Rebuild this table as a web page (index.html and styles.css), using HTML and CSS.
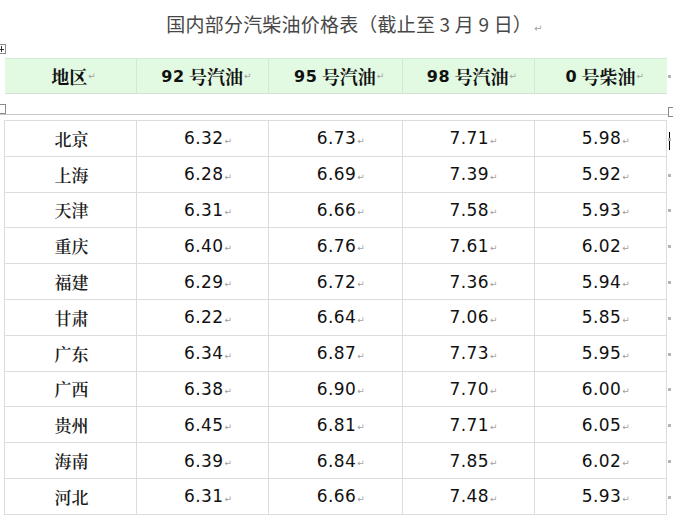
FILE: index.html
```html
<!DOCTYPE html>
<html lang="zh-CN">
<head>
<meta charset="utf-8">
<title>国内部分汽柴油价格表</title>
<link rel="stylesheet" href="styles.css">
</head>
<body>
<div class="page">
  <h1 class="title">国内部分汽柴油价格表（截止至 3 月 9 日）<span class="pm">↵</span></h1>

  <div class="hdr-wrap">
    <span class="anchor anchor-plus"></span>
    <div class="row hdr">
      <div class="cell"><span class="cjk">地区</span><span class="pm">↵</span></div>
      <div class="cell"><span class="num">92</span><span class="cjk"> 号汽油</span><span class="pm">↵</span></div>
      <div class="cell"><span class="num">95</span><span class="cjk"> 号汽油</span><span class="pm">↵</span></div>
      <div class="cell"><span class="num">98</span><span class="cjk"> 号汽油</span><span class="pm">↵</span></div>
      <div class="cell"><span class="num">0</span><span class="cjk"> 号柴油</span><span class="pm">↵</span></div>
    </div>
  </div>

  <div class="body-wrap">
    <span class="anchor anchor-left"></span>
    <span class="anchor anchor-right"></span>
    <div class="grid">
      <div class="row data"><div class="cell name">北京</div><div class="cell val">6.32<span class="pm">↵</span></div><div class="cell val">6.73<span class="pm">↵</span></div><div class="cell val">7.71<span class="pm">↵</span></div><div class="cell val">5.98<span class="pm">↵</span></div><span class="caret"></span></div>
      <div class="row data"><div class="cell name">上海</div><div class="cell val">6.28<span class="pm">↵</span></div><div class="cell val">6.69<span class="pm">↵</span></div><div class="cell val">7.39<span class="pm">↵</span></div><div class="cell val">5.92<span class="pm">↵</span></div></div>
      <div class="row data"><div class="cell name">天津</div><div class="cell val">6.31<span class="pm">↵</span></div><div class="cell val">6.66<span class="pm">↵</span></div><div class="cell val">7.58<span class="pm">↵</span></div><div class="cell val">5.93<span class="pm">↵</span></div></div>
      <div class="row data"><div class="cell name">重庆</div><div class="cell val">6.40<span class="pm">↵</span></div><div class="cell val">6.76<span class="pm">↵</span></div><div class="cell val">7.61<span class="pm">↵</span></div><div class="cell val">6.02<span class="pm">↵</span></div></div>
      <div class="row data"><div class="cell name">福建</div><div class="cell val">6.29<span class="pm">↵</span></div><div class="cell val">6.72<span class="pm">↵</span></div><div class="cell val">7.36<span class="pm">↵</span></div><div class="cell val">5.94<span class="pm">↵</span></div></div>
      <div class="row data"><div class="cell name">甘肃</div><div class="cell val">6.22<span class="pm">↵</span></div><div class="cell val">6.64<span class="pm">↵</span></div><div class="cell val">7.06<span class="pm">↵</span></div><div class="cell val">5.85<span class="pm">↵</span></div></div>
      <div class="row data"><div class="cell name">广东</div><div class="cell val">6.34<span class="pm">↵</span></div><div class="cell val">6.87<span class="pm">↵</span></div><div class="cell val">7.73<span class="pm">↵</span></div><div class="cell val">5.95<span class="pm">↵</span></div></div>
      <div class="row data"><div class="cell name">广西</div><div class="cell val">6.38<span class="pm">↵</span></div><div class="cell val">6.90<span class="pm">↵</span></div><div class="cell val">7.70<span class="pm">↵</span></div><div class="cell val">6.00<span class="pm">↵</span></div></div>
      <div class="row data"><div class="cell name">贵州</div><div class="cell val">6.45<span class="pm">↵</span></div><div class="cell val">6.81<span class="pm">↵</span></div><div class="cell val">7.71<span class="pm">↵</span></div><div class="cell val">6.05<span class="pm">↵</span></div></div>
      <div class="row data"><div class="cell name">海南</div><div class="cell val">6.39<span class="pm">↵</span></div><div class="cell val">6.84<span class="pm">↵</span></div><div class="cell val">7.85<span class="pm">↵</span></div><div class="cell val">6.02<span class="pm">↵</span></div></div>
      <div class="row data"><div class="cell name">河北</div><div class="cell val">6.31<span class="pm">↵</span></div><div class="cell val">6.66<span class="pm">↵</span></div><div class="cell val">7.48<span class="pm">↵</span></div><div class="cell val">5.93<span class="pm">↵</span></div></div>
    </div>
  </div>
</div>
</body>
</html>
```

FILE: styles.css
```css
html, body {
  margin: 0;
  padding: 0;
  background: #ffffff;
}

.page {
  position: relative;
  width: 673px;
  height: 515px;
  overflow: hidden;
}

.title {
  margin: 0;
  height: 58px;
  box-sizing: border-box;
  padding: 10px 0 0 36px;
  line-height: 28px;
  text-align: center;
  font-family: "Noto Sans CJK SC", sans-serif;
  font-weight: 400;
  font-size: 19px;
  color: #474747;
  letter-spacing: 0.2px;
}

.title .pm {
  font-size: 10px;
  margin-left: 2px;
}

.pm {
  font-family: "DejaVu Sans", sans-serif;
  font-weight: 400;
  font-size: 9px;
  color: #a0a0a0;
  margin-left: 1px;
}

.hdr-wrap {
  position: relative;
  padding-left: 5px;
}

.row {
  position: relative;
  display: grid;
  grid-template-columns: 132px 132px 133.5px 132px 132.5px;
  width: 662px;
}

.cell {
  display: flex;
  align-items: center;
  justify-content: center;
  box-sizing: border-box;
  white-space: pre;
}

.hdr {
  height: 36px;
  background: #e2f9e2;
  border-top: 1px solid #d3ead3;
  border-bottom: 1px solid #d3e3d3;
  box-sizing: border-box;
}

.hdr .cell {
  border-right: 1px solid #d6e6d6;
  padding-left: 8px;
  font-weight: 700;
  color: #111;
}

.hdr .cell:first-child {
  padding-left: 6px;
}

.hdr .cell:last-child {
  border-right: none;
}

.hdr .num {
  font-family: "DejaVu Sans", sans-serif;
  font-size: 16px;
  font-weight: 700;
  letter-spacing: 0.5px;
}

.hdr .cjk {
  font-family: "Noto Serif CJK SC", "Noto Sans CJK SC", serif;
  font-size: 18px;
  font-weight: 700;
}

.hdr::after,
.data::after {
  content: "";
  position: absolute;
  right: -4px;
  top: 50%;
  width: 3px;
  height: 3px;
  margin-top: -1px;
  background: #b5b5b5;
}

.body-wrap {
  position: relative;
  margin-top: 20px;
  padding-left: 5px;
  border-top: 1px solid #c9c9c9;
  padding-top: 5px;
}

.grid {
  width: 662px;
  border-top: 1px solid #dcdcdc;
  border-left: 1px solid #dcdcdc;
  box-sizing: content-box;
  margin-left: -1px;
}

.data {
  height: 35.8px;
  box-sizing: border-box;
}

.data .cell {
  border-right: 1px solid #dcdcdc;
  border-bottom: 1px solid #dcdcdc;
}

.name {
  font-family: "Noto Serif CJK SC", "Noto Sans CJK SC", serif;
  font-size: 17px;
  font-weight: 600;
  color: #1a1a1a;
  padding-left: 2px;
}

.val {
  font-family: "DejaVu Sans", sans-serif;
  font-size: 17px;
  letter-spacing: 0.4px;
  color: #111;
  padding-left: 11px;
}

.val .pm {
  align-self: center;
  margin-top: 5px;
  letter-spacing: 0;
}

.anchor {
  position: absolute;
  left: -4px;
  width: 8px;
  height: 8px;
  border: 1px solid #8a8a8a;
  background: #fff;
  box-sizing: content-box;
}

.anchor-plus {
  top: -14px;
}

.anchor-plus::before {
  content: "";
  position: absolute;
  left: 1px;
  right: 1px;
  top: 3.5px;
  height: 1px;
  background: #333;
}

.anchor-plus::after {
  content: "";
  position: absolute;
  top: 1px;
  bottom: 1px;
  left: 3.5px;
  width: 1px;
  background: #333;
}

.anchor-left {
  top: -11px;
}

.anchor-right {
  left: auto;
  right: -5px;
  top: -8px;
}

.caret {
  position: absolute;
  right: -3px;
  top: 11px;
  width: 1px;
  height: 18px;
  background: #000;
}
```
